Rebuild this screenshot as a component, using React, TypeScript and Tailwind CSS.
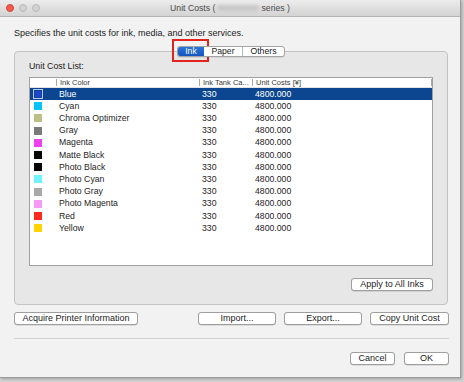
import React from "react";

const inks: [string, string][] = [
  ["Blue", "#1f45d4"],
  ["Cyan", "#00c2ff"],
  ["Chroma Optimizer", "#bebe88"],
  ["Gray", "#7a7a7a"],
  ["Magenta", "#ee40f0"],
  ["Matte Black", "#050505"],
  ["Photo Black", "#050505"],
  ["Photo Cyan", "#70f2ff"],
  ["Photo Gray", "#a8a8a8"],
  ["Photo Magenta", "#f59af5"],
  ["Red", "#ff2b1c"],
  ["Yellow", "#ffd400"],
];

function Btn({ label, w }: { label: string; w: string }) {
  return (
    <div
      className={`${w} h-[13px] rounded-[3px] border border-[#9e9e9e] bg-white shadow-[0_0.5px_0.5px_rgba(0,0,0,0.18)] text-[9px] leading-none text-[#1c1c1c] flex items-center justify-center`}
    >
      {label}
    </div>
  );
}

function HeadCell({ label }: { label: string }) {
  return (
    <div className="flex items-center h-full overflow-hidden whitespace-nowrap">
      <span className="w-px h-[7px] bg-[#a9a9a9] shrink-0" />
      <span className="ml-[3px]">{label}</span>
    </div>
  );
}

export default function App() {
  return (
    <div
      className="relative w-[464px] h-[382px] bg-[#d4d4d4] overflow-hidden"
      style={{ fontFamily: '"Liberation Sans", Arial, sans-serif' }}
    >
      <div className="w-[461px] h-[378px] bg-[#f2f2f2] border-r border-b border-[#9c9c9c] shadow-[1px_1px_3px_rgba(0,0,0,0.25)] flex flex-col">
        {/* title bar */}
        <div className="h-[17px] shrink-0 bg-gradient-to-b from-[#ececec] to-[#d3d3d3] border-b border-[#b4b4b4] grid grid-cols-[1fr_auto_1fr] items-center">
          <div className="flex items-center gap-[5px] pl-[6px]">
            <span className="w-[8px] h-[8px] rounded-full bg-[#f25a4f] border border-[#d9443a]" />
            <span className="w-[8px] h-[8px] rounded-full bg-[#d2d2d2] border border-[#b9b9b9]" />
            <span className="w-[8px] h-[8px] rounded-full bg-[#d2d2d2] border border-[#b9b9b9]" />
          </div>
          <div className="flex items-center text-[8.7px] leading-none text-[#4a4a4a] whitespace-nowrap">
            <span>Unit Costs (</span>
            <span className="inline-block w-[42px] h-[6px] mx-[2px] rounded-sm bg-[#c9c9c9] blur-[1.5px]" />
            <span>series )</span>
          </div>
          <div />
        </div>

        {/* body */}
        <div className="flex flex-col pl-[14px] pr-[11px]">
          <div className="mt-[11px] h-[11px] text-[9px] leading-[11px] text-[#1a1a1a] whitespace-nowrap">
            Specifies the unit costs for ink, media, and other services.
          </div>

          {/* tabs */}
          <div className="mt-[7px] relative z-10 flex justify-center pr-[1px]">
            <div className="flex h-[11px] rounded-[3px] border border-[#a4a4a4] bg-white text-[8.7px] leading-none text-[#1a1a1a] shadow-[0_0.5px_0.5px_rgba(0,0,0,0.15)] overflow-hidden">
              <div className="w-[26px] flex items-center justify-center bg-gradient-to-b from-[#2b73dc] to-[#1456bd] text-white">
                Ink
              </div>
              <div className="w-[39px] flex items-center justify-center border-r border-[#b8b8b8]">
                Paper
              </div>
              <div className="w-[41px] flex items-center justify-center">Others</div>
            </div>
          </div>

          {/* group box */}
          <div className="-mt-[6px] mr-[1px] h-[254px] rounded-[4px] border border-[#c3c3c3] bg-[#e7e7e7] flex flex-col px-[14px]">
            <div className="mt-[9px] h-[11px] text-[8.8px] leading-[11px] text-[#1a1a1a]">Unit Cost List:</div>
            <div className="mt-[5px] h-[189px] border border-[#a0a0a0] bg-white flex flex-col">
              <div className="h-[10px] shrink-0 grid grid-cols-[26px_143px_53px_179px_1px] text-[7.5px] leading-none text-[#3a3a3a] border-b border-[#e2e2e2]">
                <div />
                <HeadCell label="Ink Color" />
                <HeadCell label="Ink Tank Ca..." />
                <HeadCell label="Unit Costs [¥]" />
                <div className="flex items-center">
                  <span className="w-px h-[7px] bg-[#a9a9a9]" />
                </div>
              </div>
              {inks.map(([name, color], i) => {
                const sel = i === 0;
                return (
                  <div
                    key={name}
                    className={`h-[12.2px] shrink-0 grid grid-cols-[26px_143px_53px_180px] items-center text-[8.7px] leading-none ${
                      sel ? "bg-[#0d4690] text-white" : "text-[#1e1e1e]"
                    }`}
                  >
                    <div className="flex items-center justify-start pl-[3px]">
                      {sel ? (
                        <span className="w-[10px] h-[10px] border border-[#b9c9ee] p-px flex">
                          <span className="flex-1" style={{ backgroundColor: color }} />
                        </span>
                      ) : (
                        <span className="w-[8px] h-[8px] ml-[1px]" style={{ backgroundColor: color }} />
                      )}
                    </div>
                    <div className="pl-[3px] whitespace-nowrap">{name}</div>
                    <div className="pl-[3px]">330</div>
                    <div className="pl-[3px]">4800.000</div>
                  </div>
                );
              })}
            </div>
            <div className="mt-[12px] flex justify-end">
              <Btn label="Apply to All Inks" w="w-[82px]" />
            </div>
          </div>

          {/* bottom buttons */}
          <div className="mt-[7px] flex items-center">
            <Btn label="Acquire Printer Information" w="w-[124px]" />
            <div className="flex-1" />
            <div className="flex gap-[8px]">
              <Btn label="Import..." w="w-[78px]" />
              <Btn label="Export..." w="w-[78px]" />
              <Btn label="Copy Unit Cost" w="w-[79px]" />
            </div>
          </div>

          <div className="mt-[13px] h-px bg-[#d2d2d2]" />

          <div className="mt-[13px] flex justify-end gap-[9px]">
            <Btn label="Cancel" w="w-[45px]" />
            <Btn label="OK" w="w-[45px]" />
          </div>
        </div>
      </div>

      {/* red annotation box */}
      <div className="absolute left-[172px] top-[39px] w-[37px] h-[23px] border-2 border-[#e3241e]" />
    </div>
  );
}
